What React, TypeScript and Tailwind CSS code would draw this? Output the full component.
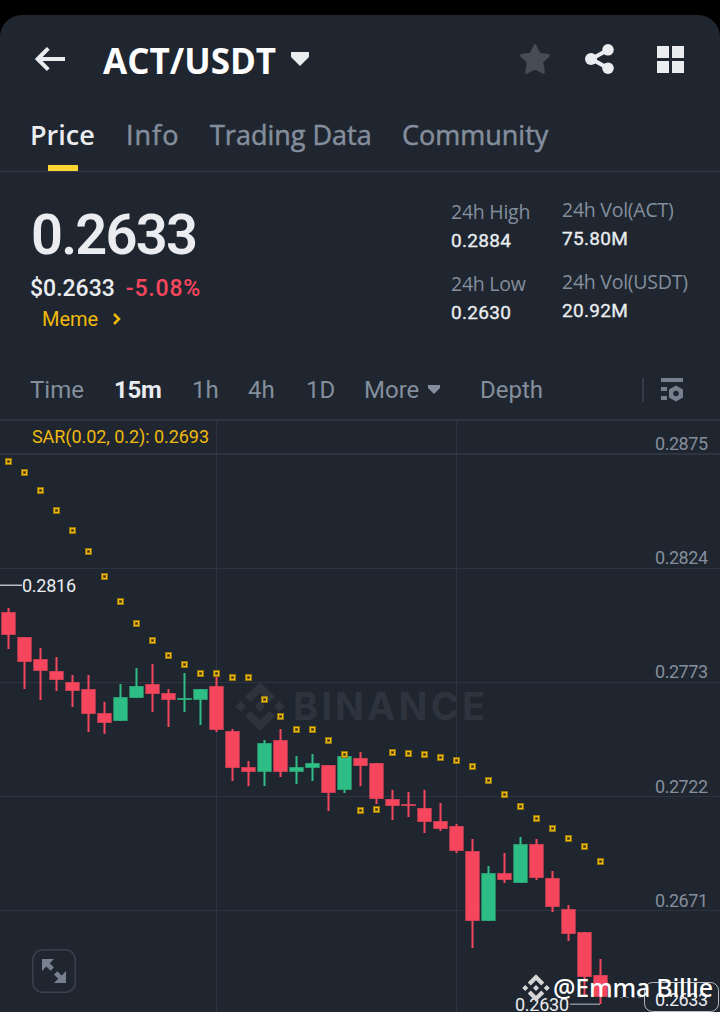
const DIN = "font-[Roboto,sans-serif]";
const PLEX = "font-['Open_Sans',sans-serif]";

// [high, body top, body bottom, low, 1 = up]
const CANDLES = [
  [608, 612, 635, 649, 0],
  [637, 637, 662, 689, 0],
  [648, 659, 671, 700, 0],
  [657, 671, 680, 691, 0],
  [675, 682, 691, 707, 0],
  [675, 689, 714, 732, 0],
  [702, 713, 723, 734, 0],
  [684, 697, 721, 721, 1],
  [668, 686, 698, 698, 1],
  [664, 684, 694, 712, 0],
  [689, 693, 700, 727, 0],
  [673, 698, 700, 712, 1],
  [689, 689, 700, 725, 1],
  [677, 686, 730, 732, 0],
  [729, 731, 768, 781, 0],
  [761, 767, 772, 786, 0],
  [740, 743, 772, 786, 1],
  [729, 740, 772, 777, 0],
  [756, 767, 772, 784, 1],
  [754, 763, 768, 781, 1],
  [765, 765, 793, 811, 0],
  [752, 756, 790, 793, 1],
  [752, 758, 766, 786, 0],
  [763, 763, 799, 804, 0],
  [790, 799, 806, 820, 0],
  [792, 804, 806, 817, 0],
  [790, 808, 822, 833, 0],
  [803, 821, 829, 831, 0],
  [824, 826, 851, 853, 0],
  [839, 851, 921, 948, 0],
  [866, 873, 921, 921, 1],
  [853, 873, 880, 883, 0],
  [837, 844, 883, 883, 1],
  [839, 844, 878, 880, 0],
  [871, 878, 907, 912, 0],
  [905, 909, 934, 941, 0],
  [932, 932, 977, 995, 0],
  [959, 975, 997, 1004, 0],
];

const SAR = [
  461, 472, 490, 510, 530, 551, 576, 601, 623, 640, 655, 664, 673, 673, 677, 677, 699, 716, 729,
  729, 740, 754, 810, 809, 752, 753, 754, 757, 760, 766, 780, 794, 806, 818, 828, 838, 846, 861,
];

const AXIS = [
  { label: "0.2875", y: 450 },
  { label: "0.2824", y: 564 },
  { label: "0.2773", y: 678 },
  { label: "0.2722", y: 793 },
  { label: "0.2671", y: 907 },
];

// 24x24, centred on the origin
function BinanceMark() {
  return (
    <>
      <path d="M-7.4-4.9 0-12.2 7.4-4.9 4.7-2.2 0-6.9-4.7-2.2Z" />
      <path d="M-7.4 4.9 0 12.2 7.4 4.9 4.7 2.2 0 6.9-4.7 2.2Z" />
      <path d="M0-2.7 2.7 0 0 2.7-2.7 0Z" />
      <path d="M-9.6-2.7-6.9 0-9.6 2.7-12.3 0Z" />
      <path d="M9.6-2.7 12.3 0 9.6 2.7 6.9 0Z" />
    </>
  );
}

function Header() {
  return (
    <header className="flex h-[89px] items-center pb-px pl-[35px] pr-[36px]">
      <svg width="30" height="24" viewBox="0 0 30 24" className="block" fill="none" stroke="#eaecef" strokeWidth="4">
        <path d="M30 12H3M13.3 1.4 2.7 12l10.6 10.6" />
      </svg>
      <h1 className={`${PLEX} ml-[38px] mt-[3px] w-[188px] whitespace-nowrap text-[35px] font-bold leading-none text-white`}>
        ACT/USDT
      </h1>
      <svg width="18" height="14" viewBox="0 0 18 14" fill="#eaecef">
        <path d="M0 0h18v5L9 14 0 5Z" />
      </svg>
      <div className="ml-auto flex items-center">
        <svg width="30" height="30" viewBox="0 0 30 30" fill="#474d57" stroke="#474d57" strokeWidth="3" strokeLinejoin="round">
          <path d="m15 1.800 4 8.400 9.300 1.400-6.700 6.400 1.800 10.200-8.400-4.400-8.400 4.400L8.400 18 1.700 11.600l9.300-1.400Z" />
        </svg>
        <svg width="30" height="30" viewBox="0 0 30 30" className="ml-[35px]" fill="#eaecef">
          <path d="M23 5.800 6.500 15 23 24.200" fill="none" stroke="#eaecef" strokeWidth="4" />
          <circle cx="6" cy="15" r="6" />
          <circle cx="23" cy="5.800" r="5.800" />
          <circle cx="23" cy="24.200" r="5.800" />
        </svg>
        <div className="ml-[42px] grid grid-cols-2 gap-[3px]">
          <i className="size-3 bg-[#eaecef]" />
          <i className="size-3 bg-[#eaecef]" />
          <i className="size-3 bg-[#eaecef]" />
          <i className="size-3 bg-[#eaecef]" />
        </div>
      </div>
    </header>
  );
}

function Tabs() {
  return (
    <nav className={`${PLEX} flex h-[68px] border-b border-[#333b47] pl-[30px] pt-[13px] text-[27px] leading-[36px] text-[#848e9c] [-webkit-text-stroke:0.5px]`}>
      <div className="flex w-24 flex-col justify-between">
        <span className="font-semibold text-[#eaecef] [-webkit-text-stroke:0px]">Price</span>
        <i className="ml-[18px] h-1.5 w-[30px] bg-[#fcd535]" />
      </div>
      <span className="w-[84px] tracking-[1px]">Info</span>
      <span className="w-48">Trading Data</span>
      <span>Community</span>
    </nav>
  );
}

function Stat({ label, value }: { label: string; value: string }) {
  return (
    <div className="h-[72px] whitespace-nowrap">
      <div className={`${PLEX} text-[19.5px] leading-7 tracking-[-0.25px] text-[#848e9c]`}>{label}</div>
      <div className={`${DIN} text-[19px] leading-[30px] tracking-[0.3px] text-[#eaecef] [-webkit-text-stroke:0.35px]`}>
        {value}
      </div>
    </div>
  );
}

function Summary() {
  return (
    <section className="flex h-[188px] pl-[30px]">
      <div className={`${DIN} w-[421px]`}>
        <div className="ml-px mt-[33px] text-[56px] font-semibold leading-[60px] tracking-[-1.8px] text-[#eaecef]">0.2633</div>
        <div className="mt-[10px] flex gap-[11px] text-[23px] font-medium leading-7">
          <span className="text-[#eaecef]">$0.2633</span>
          <span className="tracking-[0.8px] text-[#f6465d]">-5.08%</span>
        </div>
        <div className="ml-3 mt-0.5 flex items-center text-xl leading-7 text-[#f0b90b]">
          Meme
          <svg width="8" height="12" viewBox="0 0 8 12" className="ml-[15px]" fill="none" stroke="#f0b90b" strokeWidth="2.500">
            <path d="m1 1 5 5-5 5" />
          </svg>
        </div>
      </div>
      <div className="w-[111px] pt-[26px]">
        <Stat label="24h High" value="0.2884" />
        <Stat label="24h Low" value="0.2630" />
      </div>
      <div className="pt-6">
        <Stat label="24h Vol(ACT)" value="75.80M" />
        <Stat label="24h Vol(USDT)" value="20.92M" />
      </div>
    </section>
  );
}

function Intervals() {
  return (
    <div className={`${DIN} flex h-[59px] items-center pl-[30px] text-2xl text-[#848e9c]`}>
      <span className="w-[84px]">Time</span>
      <span className="w-[78px] font-bold tracking-[-0.3px] text-[#eaecef]">15m</span>
      <span className="w-14">1h</span>
      <span className="w-[58px]">4h</span>
      <span className="w-[58px]">1D</span>
      <span className="w-16">More</span>
      <svg width="12" height="9" viewBox="0 0 12 9" fill="#848e9c">
        <path d="M0 0h12v3L6 9 0 3Z" />
      </svg>
      <span className="ml-10 w-[162px]">Depth</span>
      <i className="h-6 w-0.5 bg-[#333b47]" />
      <svg width="24" height="24" viewBox="0 0 24 24" className="ml-4" fill="#76808f">
        <path d="M1 0h22v4H1ZM1 9h6v4H1ZM1 18h6v4H1Z" />
        <path fillRule="evenodd" d="m16 7.500 7 4v8l-7 4-7-4v-8Zm0 5.200a2.800 2.800 0 1 0 0 5.600 2.800 2.800 0 0 0 0-5.600Z" />
      </svg>
    </div>
  );
}

function Chart() {
  return (
    <svg width="720" height="593" viewBox="0 419 720 593" className="block" fontFamily="Roboto, sans-serif">
      <g fill="#2e343f">
        <rect y="419" width="720" height="2" />
        <rect y="453" width="720" height="2" />
        {[568, 682, 796, 910].map((y) => (
          <rect key={y} y={y} width="720" height="1" />
        ))}
        <rect x="216" y="421" width="1" height="591" />
        <rect x="456" y="421" width="1" height="591" />
      </g>

      <g fill="#2d343e">
        <g transform="translate(260 706.500) scale(2)">
          <BinanceMark />
        </g>
        <text x="293" y="720" fontFamily="Inter, sans-serif" fontWeight="700" fontSize="38" textLength="192">
          BINANCE
        </text>
      </g>

      <g fill="#848e9c" fontSize="18">
        {AXIS.map((a) => (
          <text key={a.label} x="655" y={a.y} textLength="53">
            {a.label}
          </text>
        ))}
      </g>

      <text x="32" y="443" fontSize="18" fill="#f0b90b" textLength="177">
        SAR(0.02, 0.2): 0.2693
      </text>

      {CANDLES.map(([high, top, bottom, low, up], i) => {
        const x = 1 + i * 16;
        return (
          <g key={i} fill={up ? "#2ebd85" : "#f6465d"}>
            <rect x={x + 6} y={high} width="3" height={low - high} opacity="0.5" />
            <rect x={x + 7} y={high} width="1" height={low - high} />
            <rect x={x} y={top} width="15" height={bottom - top} opacity="0.6" />
            <rect x={x + 1} y={top + 0.5} width="13" height={bottom - top - 1} />
          </g>
        );
      })}

      {SAR.map((y, i) => {
        const x = 8.5 + i * 16;
        return (
          <g key={i}>
            <rect x={x - 3.5} y={y - 3} width="7" height="7" fill="#94760f" />
            <rect x={x - 2.5} y={y - 2} width="5" height="5" fill="#f0b90b" />
            <rect x={x - 1.5} y={y - 1} width="3" height="3" fill="#755f1a" />
            <rect x={x - 0.5} y={y} width="1" height="1" fill="#1f2630" />
          </g>
        );
      })}

      <g fill="#eaecef" fontSize="18">
        <rect y="584.500" width="22" height="1.500" fill="#b7bdc6" />
        <text x="22" y="592" textLength="54">0.2816</text>
        <text x="515" y="1011" textLength="54">0.2630</text>
        <rect x="570" y="1003.500" width="30" height="1.500" fill="#848e9c" />
      </g>

      <path d="M608 997.500h37" stroke="#5e6673" strokeDasharray="3 3" />
      <rect x="644.500" y="982.500" width="74" height="29" rx="8" fill="#1f2630" stroke="#b7bdc6" />
      <text x="655" y="1006" fontSize="18" fill="#eaecef" textLength="53">0.2633</text>

      <rect x="32.800" y="949.800" width="42.500" height="42.500" rx="10" fill="#1f2630" stroke="#39414d" strokeWidth="1.500" />
      <g fill="#76808f">
        <path d="M42 959h12l-4.200 4.200 4.200 4.200-3.400 3.400-4.300-4.200L42 971Z" />
        <path d="M66 983H54l4.200-4.200-4.200-4.200 3.400-3.400 4.300 4.200L66 971Z" />
      </g>

      <g transform="translate(536 988) scale(1.120)" fill="#d6d6d6">
        <BinanceMark />
      </g>
      <text x="553" y="997" fontFamily="Noto Sans, sans-serif" fontWeight="500" fontSize="25" fill="#fff" textLength="160">
        @Emma Billie
      </text>
    </svg>
  );
}

export default function App() {
  return (
    <div className="h-[1012px] w-[720px] overflow-hidden bg-black pt-[15px]">
      <main className="h-[997px] overflow-hidden rounded-t-[22px] bg-[#1f2630]">
        <Header />
        <Tabs />
        <Summary />
        <Intervals />
        <Chart />
      </main>
    </div>
  );
}
